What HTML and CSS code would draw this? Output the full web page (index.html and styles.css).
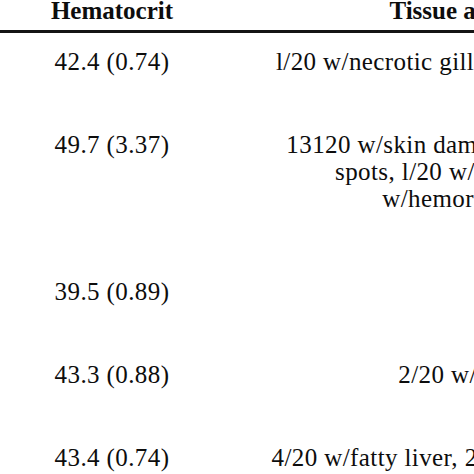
FILE: index.html
```html
<!DOCTYPE html>
<html lang="en">
<head>
<meta charset="utf-8">
<title>Hematocrit and tissue abnormalities</title>
<link rel="stylesheet" href="styles.css">
</head>
<body>
<div class="table">
  <div class="row head">
    <div class="cell">Hematocrit</div>
    <div class="cell">Tissue abnormalities</div>
  </div>
  <div class="rows">
    <div class="row">
      <div class="cell">42.4 (0.74)</div>
      <div class="cell">l/20 w/necrotic gills, 1/20 w/skin abrasions</div>
    </div>
    <div class="row row-tall">
      <div class="cell">49.7 (3.37)</div>
      <div class="cell">13120 w/skin damage, 2/20 w/raised, red<br>spots, l/20 w/ulcerated fin, 1/20<br>w/hemorrhaging livers</div>
    </div>
    <div class="row">
      <div class="cell">39.5 (0.89)</div>
      <div class="cell"></div>
    </div>
    <div class="row">
      <div class="cell">43.3 (0.88)</div>
      <div class="cell">2/20 w/mottled fins</div>
    </div>
    <div class="row">
      <div class="cell">43.4 (0.74)</div>
      <div class="cell">4/20 w/fatty liver, 2/20 w/necrotic gill areas</div>
    </div>
  </div>
</div>
</body>
</html>
```
FILE: styles.css
```css
html, body {
  margin: 0;
  padding: 0;
  background: #ffffff;
  overflow: hidden;
}

body {
  width: 474px;
  height: 474px;
  font-family: "Liberation Serif", "Times New Roman", serif;
  font-size: 25px;
  color: #0d0d0d;
}

.table {
  width: 776px;
}

.row {
  display: grid;
  grid-template-columns: 224px 552px;
  line-height: 27px;
}

.cell {
  text-align: center;
  white-space: nowrap;
  letter-spacing: 0.4px;
}

.head {
  line-height: 22px;
  font-weight: bold;
  padding-bottom: 8px;
  border-bottom: 3px solid #141414;
}

.head .cell {
  letter-spacing: 0;
}

.rows {
  display: flex;
  flex-direction: column;
  gap: 56px;
  padding-top: 15px;
}

.row-tall {
  padding-bottom: 10px;
}
```
